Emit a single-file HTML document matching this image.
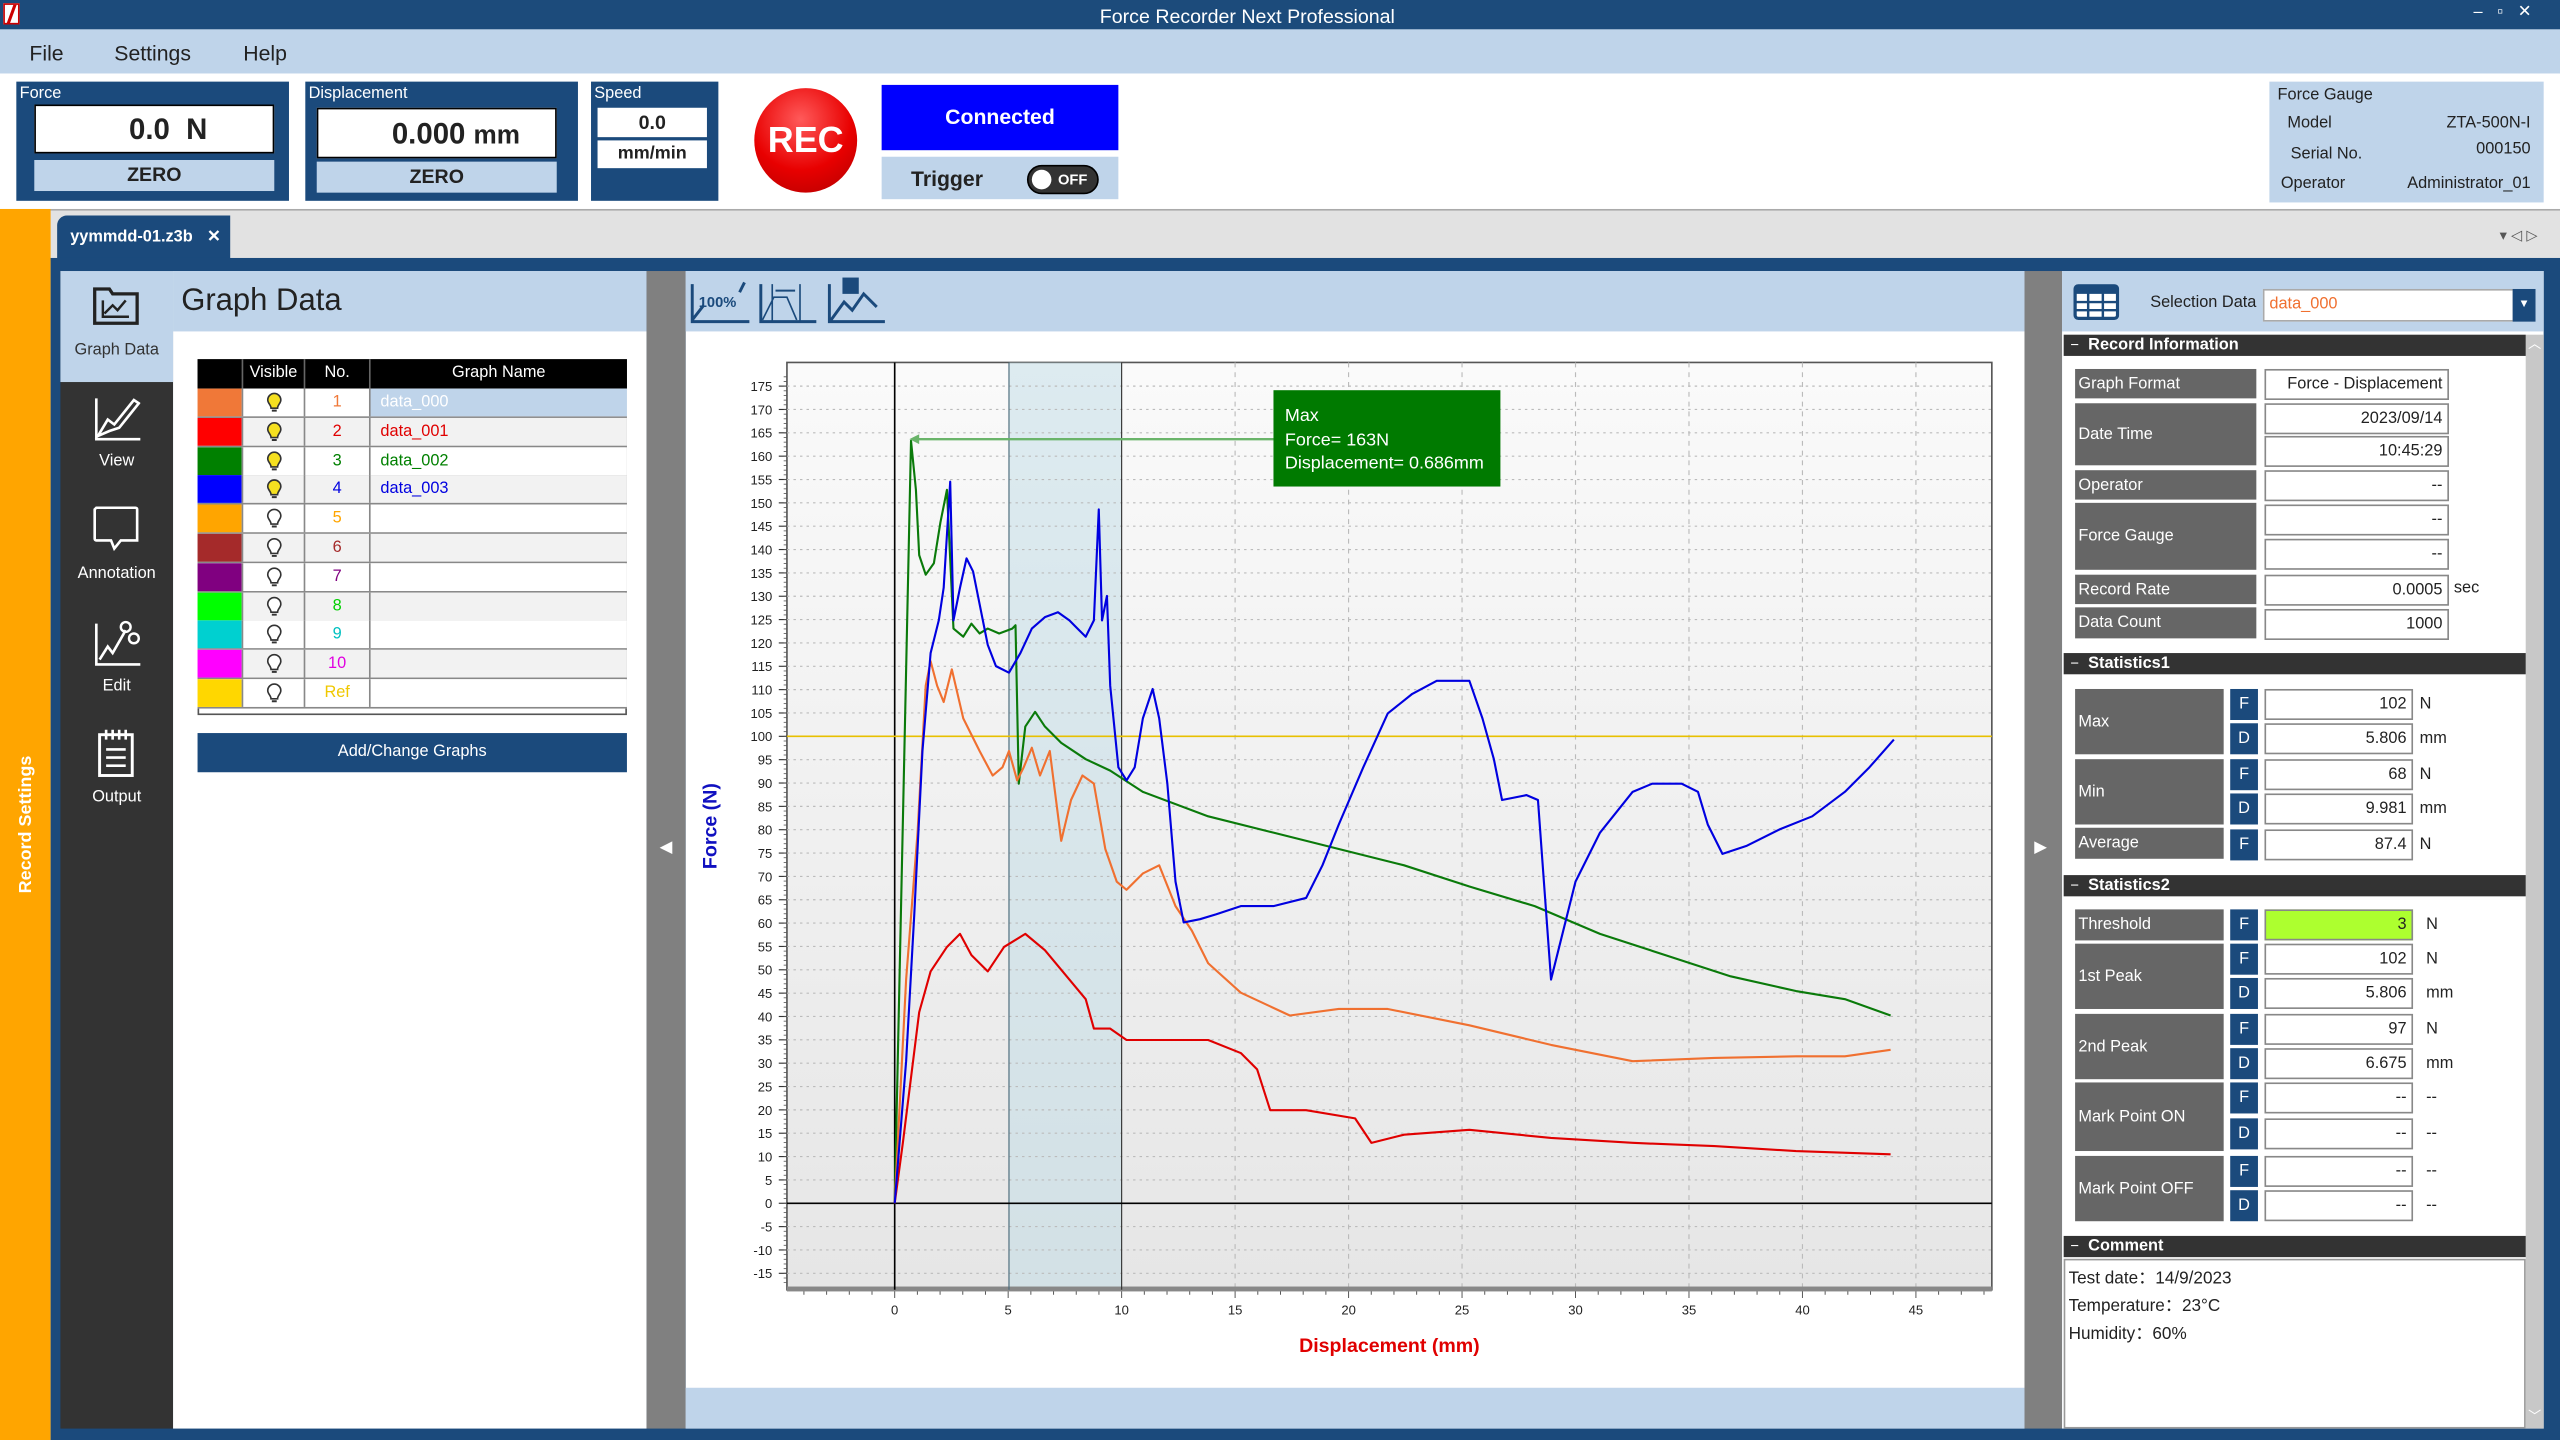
<!DOCTYPE html>
<html><head><meta charset="utf-8">
<style>
*{box-sizing:border-box;margin:0;padding:0}
html,body{width:2560px;height:1440px;overflow:hidden;background:#fff}
#w{position:absolute;left:0;top:0;width:1568px;height:882px;transform:scale(1.632653);transform-origin:0 0;font-family:"Liberation Sans",sans-serif;font-size:10px;color:#222}
.a{position:absolute}
.lbl{position:absolute;background:#666;color:#fff;font-size:10px;padding-left:2px;display:flex;align-items:center}
.val{position:absolute;background:#fff;border:1px solid #888;font-size:10px;text-align:right;padding-right:3px;line-height:18px;height:19px}
.fd{position:absolute;background:#1b4a7c;color:#fff;font-size:10px;text-align:center;line-height:19px;width:17px;height:19px}
.unit{position:absolute;font-size:10px}
.sec{position:absolute;left:1264px;width:283px;height:13px;background:#333;color:#fff;font-weight:bold;font-size:10px;line-height:13px;padding-left:15px}
.sec:before{content:"−";position:absolute;left:4px;font-weight:normal;font-size:9px}
.nav{position:absolute;left:37px;width:69px;text-align:center;color:#fff;font-size:10px}
.row{position:absolute;left:121px;width:263px;height:18px;border-bottom:1px solid #888}
.row div{position:absolute;top:0;height:17px;line-height:17px;font-size:10px}
.row svg{position:absolute;left:14px;top:2px}
</style></head><body><div id="w">
<div class="a" style="left:0;top:0;width:1568px;height:18px;background:#1c4b7b"></div>
<div class="a" style="left:2px;top:2px;width:10px;height:13px;background:#fff;border:1px solid #c00"><div style="position:absolute;left:3px;top:0;width:2px;height:12px;background:#c00;transform:skewX(-20deg)"></div></div>
<div class="a" style="left:0;top:3px;width:1528px;text-align:center;color:#fff;font-size:12px">Force Recorder Next Professional</div>
<div class="a" style="left:1515px;top:2px;color:#fff;font-size:10px;letter-spacing:9px">–▫✕</div>
<div class="a" style="left:0;top:18px;width:1568px;height:27px;background:#bfd4ea"></div>
<div class="a" style="left:18px;top:25px;font-size:13px">File</div>
<div class="a" style="left:70px;top:25px;font-size:13px">Settings</div>
<div class="a" style="left:149px;top:25px;font-size:13px">Help</div>
<div class="a" style="left:10px;top:50px;width:167px;height:73px;background:#1b4a7c"></div>
<div class="a" style="left:12px;top:52px;color:#fff;font-size:10px">Force</div>
<div class="a" style="left:21px;top:64px;width:147px;height:30px;background:#fff;border:1px solid #000;font-size:18px;font-weight:bold;line-height:28px;padding-left:57px">0.0&nbsp;&nbsp;N</div>
<div class="a" style="left:21px;top:98px;width:147px;height:19px;background:#bfd4ea;font-weight:bold;font-size:12px;text-align:center;line-height:19px">ZERO</div>
<div class="a" style="left:187px;top:50px;width:167px;height:73px;background:#1b4a7c"></div>
<div class="a" style="left:189px;top:52px;color:#fff;font-size:10px">Displacement</div>
<div class="a" style="left:194px;top:66px;width:147px;height:31px;background:#fff;border:1px solid #000;font-size:18px;font-weight:bold;line-height:30px;padding-left:45px">0.000 <span style="font-size:16px">mm</span></div>
<div class="a" style="left:194px;top:99px;width:147px;height:19px;background:#bfd4ea;font-weight:bold;font-size:12px;text-align:center;line-height:19px">ZERO</div>
<div class="a" style="left:362px;top:50px;width:78px;height:73px;background:#1b4a7c"></div>
<div class="a" style="left:364px;top:52px;color:#fff;font-size:10px">Speed</div>
<div class="a" style="left:366px;top:66px;width:67px;height:18px;background:#fff;font-weight:bold;font-size:12px;text-align:center;line-height:18px">0.0</div>
<div class="a" style="left:366px;top:86px;width:67px;height:17px;background:#fff;font-weight:bold;font-size:11px;text-align:center;line-height:17px">mm/min</div>
<div class="a" style="left:462px;top:54px;width:63px;height:64px;border-radius:50%;background:radial-gradient(circle at 45% 30%,#ff5a5a,#e80000 55%,#b00000);color:#fff;font-weight:bold;font-size:22px;text-align:center;line-height:64px">REC</div>
<div class="a" style="left:540px;top:52px;width:145px;height:40px;background:#0000ff;color:#fff;font-weight:bold;font-size:13px;text-align:center;line-height:40px">Connected</div>
<div class="a" style="left:540px;top:96px;width:145px;height:26px;background:#bfd4ea"></div>
<div class="a" style="left:558px;top:102px;font-weight:bold;font-size:13px">Trigger</div>
<div class="a" style="left:629px;top:101px;width:44px;height:18px;border-radius:9px;background:#333;border:1px solid #000"><div style="position:absolute;left:2px;top:2px;width:12px;height:12px;border-radius:50%;background:#fff"></div><div style="position:absolute;left:18px;top:3px;color:#fff;font-size:9px;font-weight:bold">OFF</div></div>
<div class="a" style="left:1390px;top:50px;width:168px;height:74px;background:#bfd4ea"></div>
<div class="a" style="left:1395px;top:53px;font-size:10px">Force Gauge</div>
<div class="a" style="left:1401px;top:70px;font-size:10px">Model</div>
<div class="a" style="left:1403px;top:89px;font-size:10px">Serial No.</div>
<div class="a" style="left:1397px;top:107px;font-size:10px">Operator</div>
<div class="a" style="left:1450px;top:70px;width:100px;text-align:right;font-size:10px">ZTA-500N-I</div>
<div class="a" style="left:1450px;top:86px;width:100px;text-align:right;font-size:10px">000150</div>
<div class="a" style="left:1450px;top:107px;width:100px;text-align:right;font-size:10px">Administrator_01</div>
<div class="a" style="left:0;top:128px;width:1568px;height:32px;background:#e2e2e2;border-top:1px solid #aaa"></div>
<div class="a" style="left:0;top:128px;width:31px;height:754px;background:#ffa500"></div>
<div class="a" style="left:16px;top:505px;transform:translate(-50%,-50%) rotate(-90deg);color:#fff;font-weight:bold;font-size:11px;white-space:nowrap">Record Settings</div>
<div class="a" style="left:35px;top:132px;width:106px;height:28px;background:#1b4a7c;border-radius:6px 0 0 0;color:#fff;font-weight:bold;font-size:10px;line-height:28px;padding-left:8px">yymmdd-01.z3b <span style="margin-left:6px">✕</span></div>
<div class="a" style="left:1531px;top:139px;font-size:9px;color:#555">▾ ◁ ▷</div>
<div class="a" style="left:31px;top:158px;width:1537px;height:724px;background:#1b4a7c"></div>
<div class="a" style="left:37px;top:166px;width:69px;height:709px;background:#333"></div>
<div class="a" style="left:37px;top:166px;width:69px;height:68px;background:#bfd4ea"></div>
<svg class="a" style="left:56px;top:174px" width="30" height="26" viewBox="0 0 30 26"><path d="M2 3h9l2 3h15v18H2z" fill="none" stroke="#222" stroke-width="2"/><path d="M7 10v10h16M8 18l5-5 3 3 5-6" fill="none" stroke="#222" stroke-width="1.5"/></svg>
<div class="nav" style="top:209px;color:#333">Graph Data</div>
<svg class="a" style="left:56px;top:240px" width="30" height="32" viewBox="0 0 30 32"><path d="M3 4v25h27" fill="none" stroke="#fff" stroke-width="1.6"/><path d="M4 27l6-10 4 3 12-15 3 2-12 15-6 2z" fill="none" stroke="#fff" stroke-width="1.6"/></svg>
<div class="nav" style="top:277px">View</div>
<svg class="a" style="left:56px;top:309px" width="30" height="30" viewBox="0 0 30 30"><path d="M3 2h24a1 1 0 0 1 1 1v19h-10l-4 5-2-5H3a1 1 0 0 1-1-1V3z" fill="none" stroke="#fff" stroke-width="1.6"/></svg>
<div class="nav" style="top:346px">Annotation</div>
<svg class="a" style="left:56px;top:378px" width="30" height="32" viewBox="0 0 30 32"><path d="M3 4v25h27" fill="none" stroke="#fff" stroke-width="1.6"/><path d="M5 26l5-8 3 4 8-14" fill="none" stroke="#fff" stroke-width="1.6"/><circle cx="21" cy="6" r="3" fill="none" stroke="#fff" stroke-width="1.5"/><circle cx="26" cy="13" r="3" fill="none" stroke="#fff" stroke-width="1.5"/></svg>
<div class="nav" style="top:415px">Edit</div>
<svg class="a" style="left:58px;top:445px" width="26" height="32" viewBox="0 0 26 32"><rect x="3" y="5" width="20" height="25" fill="none" stroke="#fff" stroke-width="1.8"/><path d="M7 2v6M11 2v6M15 2v6M19 2v6M7 14h12M7 19h12M7 24h12" stroke="#fff" stroke-width="1.6"/></svg>
<div class="nav" style="top:483px">Output</div>
<div class="a" style="left:106px;top:166px;width:290px;height:709px;background:#fff"></div>
<div class="a" style="left:106px;top:166px;width:290px;height:37px;background:#bfd4ea"></div>
<div class="a" style="left:111px;top:174px;font-size:19px;color:#222">Graph Data</div>
<div class="a" style="left:121px;top:220px;width:263px;height:218px;border:1px solid #555;background:#fff"></div>
<div class="a" style="left:121px;top:220px;width:263px;height:18px;background:#000;color:#fff;font-size:10px;line-height:18px">
<span class="a" style="left:27px;width:38px;text-align:center;border-left:1px solid #666;height:18px">Visible</span><span class="a" style="left:65px;width:40px;text-align:center;border-left:1px solid #666;height:18px">No.</span><span class="a" style="left:105px;width:158px;text-align:center;border-left:1px solid #666;height:18px">Graph Name</span></div>
<div id="rows"></div>
<div class="a" style="left:121px;top:449px;width:263px;height:24px;background:#1b4a7c;color:#fff;font-size:10px;text-align:center;line-height:24px">Add/Change Graphs</div>
<div class="a" style="left:396px;top:166px;width:24px;height:709px;background:#808080"></div>
<div class="a" style="left:404px;top:514px;color:#fff;font-size:10px">◀</div>
<div class="a" style="left:1240px;top:166px;width:23px;height:709px;background:#808080"></div>
<div class="a" style="left:1246px;top:514px;color:#fff;font-size:10px">▶</div>
<div class="a" style="left:420px;top:166px;width:820px;height:709px;background:#fff"></div>
<div class="a" style="left:420px;top:166px;width:820px;height:37px;background:#bfd4ea"></div>
<div class="a" style="left:420px;top:850px;width:820px;height:25px;background:#bfd4ea"></div>
<svg class="a" style="left:420px;top:166px" width="140" height="37" viewBox="0 0 140 37">
<g fill="none" stroke="#1b4a7c" stroke-width="1.8"><path d="M4 8v23h35M4 30l7-9"/><path d="M36 7l-3 6"/><path d="M46 8v23h34"/><path d="M47 30l7-14h8l6 14M53 8v23M70 8v23" stroke-width="1"/><path d="M55 12h12" stroke-width="1.2"/><path d="M88 8v23h34M89 30l8-11 5 5 7-10 8 8"/></g>
<text x="8" y="22" font-size="9" font-weight="bold" fill="#1b4a7c" font-family="Liberation Sans">100%</text>
<rect x="96" y="4" width="10" height="10" fill="#1b4a7c"/>
</svg>
<svg class="a" style="left:420px;top:203px" width="820" height="647" viewBox="420 203 820 647" font-family="Liberation Sans">
<defs><linearGradient id="g" x1="0" y1="0" x2="0" y2="1"><stop offset="0" stop-color="#fafafa"/><stop offset="1" stop-color="#e6e6e6"/></linearGradient></defs>
<rect x="482" y="222" width="738" height="568" fill="url(#g)" stroke="#555"/>
<rect x="618" y="222" width="69" height="568" fill="#bfdce6" opacity="0.5"/>
<g id="grid"></g>
<line x1="548" y1="222" x2="548" y2="790" stroke="#000"/>
<line x1="618" y1="222" x2="618" y2="790" stroke="#4a6a7a" stroke-width="0.7"/>
<line x1="687" y1="222" x2="687" y2="790" stroke="#333" stroke-width="0.7"/>
<line x1="482" y1="737" x2="1220" y2="737" stroke="#000"/>
<line x1="482" y1="451" x2="1220" y2="451" stroke="#e8c000"/>
<g fill="none" stroke-width="1.3" stroke-linejoin="round">
<polyline stroke="#0a7a0a" points="548,737 558,270 561,300 563,340 567,352 572,345 576,320 580,300 584,385 590,390 595,382 600,388 605,385 612,388 620,385 622,383 624,480 628,445 634,436 640,445 650,455 665,465 680,472 700,485 740,500 780,510 820,520 860,530 900,543 940,555 980,572 1020,585 1060,598 1100,607 1130,612 1158,622"/>
<polyline stroke="#f07030" points="548,737 555,600 562,510 567,420 570,405 574,420 578,430 583,410 590,440 600,460 608,475 614,470 618,460 623,478 627,470 632,458 637,475 643,460 650,515 656,490 663,475 670,480 677,520 684,540 690,545 700,535 710,530 720,555 730,570 740,590 760,608 790,622 820,618 850,618 900,628 950,640 1000,650 1050,648 1100,647 1130,647 1158,643"/>
<polyline stroke="#e00000" points="548,737 553,700 558,660 563,620 570,595 580,580 588,572 595,585 605,595 615,580 628,572 640,582 655,600 665,612 670,630 680,630 690,637 720,637 740,637 760,645 770,655 778,680 800,680 830,685 840,700 860,695 900,692 950,697 1000,700 1050,702 1100,705 1158,707"/>
<polyline stroke="#0000e0" points="548,737 555,650 560,560 565,460 570,400 575,380 578,360 582,295 584,380 588,360 592,342 596,350 600,370 605,395 610,408 618,412 625,400 632,385 640,378 648,375 655,380 660,385 665,390 670,380 673,312 675,380 678,365 680,420 685,470 690,478 695,470 700,440 706,422 710,440 715,480 720,540 725,565 735,563 745,560 760,555 780,555 800,550 810,530 820,505 835,470 850,437 865,425 880,417 900,417 908,440 915,465 920,490 935,487 942,490 950,600 955,580 965,540 980,510 1000,485 1012,480 1030,480 1040,485 1046,505 1055,523 1070,518 1090,508 1110,500 1130,485 1145,470 1160,453"/>
</g>
<line x1="780" y1="269" x2="562" y2="269" stroke="#6ab46a" stroke-width="1.5"/>
<path d="M557 269l6-3v6z" fill="#6ab46a"/>
<rect x="780" y="239" width="139" height="59" fill="#007a00"/>
<text x="787" y="258" fill="#fff" font-size="11">Max</text>
<text x="787" y="273" fill="#fff" font-size="11">Force= 163N</text>
<text x="787" y="287" fill="#fff" font-size="11">Displacement= 0.686mm</text>
<g id="lab" font-size="8" fill="#222"></g>
<text transform="translate(439,506) rotate(-90)" text-anchor="middle" fill="#1010c0" font-weight="bold" font-size="12">Force (N)</text>
<text x="851" y="828" text-anchor="middle" fill="#e00000" font-weight="bold" font-size="12">Displacement (mm)</text>
</svg>
<div class="a" style="left:1263px;top:166px;width:295px;height:709px;background:#fff"></div>
<div class="a" style="left:1263px;top:166px;width:295px;height:37px;background:#bfd4ea"></div>
<svg class="a" style="left:1270px;top:174px" width="28" height="22" viewBox="0 0 28 22"><rect x="1" y="1" width="26" height="20" rx="2" fill="#fff" stroke="#1b4a7c" stroke-width="2"/><rect x="1" y="1" width="26" height="5" fill="#1b4a7c"/><path d="M1 11h26M1 16h26M9 1v20M18 1v20" stroke="#1b4a7c" stroke-width="1.5"/></svg>
<div class="a" style="left:1317px;top:180px;font-size:10px">Selection Data</div>
<div class="a" style="left:1386px;top:177px;width:154px;height:20px;background:#fff;border:1px solid #aaa;color:#f07030;font-size:10px;line-height:18px;padding-left:3px">data_000</div>
<div class="a" style="left:1539px;top:177px;width:14px;height:20px;background:#1b4a7c;color:#fff;font-size:7px;text-align:center;line-height:20px">▼</div>
<div class="a" style="left:1547px;top:205px;width:11px;height:670px;background:#c8c8c8"></div>
<div class="a" style="left:1547px;top:205px;width:11px;height:13px;color:#fff;font-size:8px;text-align:center">︿</div>
<div class="a" style="left:1547px;top:862px;width:11px;height:13px;color:#fff;font-size:8px;text-align:center">﹀</div>
<div class="sec" style="top:205px">Record Information</div>
<div class="lbl" style="left:1271px;top:226px;width:111px;height:18px">Graph Format</div>
<div class="val" style="left:1387px;top:226px;width:113px">Force - Displacement</div>
<div class="lbl" style="left:1271px;top:247px;width:111px;height:38px">Date Time</div>
<div class="val" style="left:1387px;top:247px;width:113px">2023/09/14</div>
<div class="val" style="left:1387px;top:267px;width:113px">10:45:29</div>
<div class="lbl" style="left:1271px;top:288px;width:111px;height:18px">Operator</div>
<div class="val" style="left:1387px;top:288px;width:113px">--</div>
<div class="lbl" style="left:1271px;top:308px;width:111px;height:41px">Force Gauge</div>
<div class="val" style="left:1387px;top:309px;width:113px">--</div>
<div class="val" style="left:1387px;top:330px;width:113px">--</div>
<div class="lbl" style="left:1271px;top:352px;width:111px;height:18px">Record Rate</div>
<div class="val" style="left:1387px;top:352px;width:113px">0.0005</div><div class="unit" style="left:1503px;top:355px">sec</div>
<div class="lbl" style="left:1271px;top:372px;width:111px;height:19px">Data Count</div>
<div class="val" style="left:1387px;top:373px;width:113px">1000</div>
<div class="sec" style="top:400px">Statistics1</div>
<div class="lbl" style="left:1271px;top:422px;width:91px;height:40px">Max</div>
<div class="fd" style="left:1366px;top:422px">F</div><div class="val" style="left:1387px;top:422px;width:91px">102</div><div class="unit" style="left:1482px;top:426px">N</div>
<div class="fd" style="left:1366px;top:443px">D</div><div class="val" style="left:1387px;top:443px;width:91px">5.806</div><div class="unit" style="left:1482px;top:447px">mm</div>
<div class="lbl" style="left:1271px;top:465px;width:91px;height:40px">Min</div>
<div class="fd" style="left:1366px;top:465px">F</div><div class="val" style="left:1387px;top:465px;width:91px">68</div><div class="unit" style="left:1482px;top:469px">N</div>
<div class="fd" style="left:1366px;top:486px">D</div><div class="val" style="left:1387px;top:486px;width:91px">9.981</div><div class="unit" style="left:1482px;top:490px">mm</div>
<div class="lbl" style="left:1271px;top:507px;width:91px;height:19px">Average</div>
<div class="fd" style="left:1366px;top:508px">F</div><div class="val" style="left:1387px;top:508px;width:91px">87.4</div><div class="unit" style="left:1482px;top:512px">N</div>
<div class="sec" style="top:536px">Statistics2</div>
<div class="lbl" style="left:1271px;top:557px;width:91px;height:19px">Threshold</div>
<div class="fd" style="left:1366px;top:557px">F</div><div class="val" style="left:1387px;top:557px;width:91px;background:#adff2f">3</div><div class="unit" style="left:1486px;top:561px">N</div>
<div class="lbl" style="left:1271px;top:578px;width:91px;height:40px">1st Peak</div>
<div class="fd" style="left:1366px;top:578px">F</div><div class="val" style="left:1387px;top:578px;width:91px">102</div><div class="unit" style="left:1486px;top:582px">N</div>
<div class="fd" style="left:1366px;top:599px">D</div><div class="val" style="left:1387px;top:599px;width:91px">5.806</div><div class="unit" style="left:1486px;top:603px">mm</div>
<div class="lbl" style="left:1271px;top:621px;width:91px;height:40px">2nd Peak</div>
<div class="fd" style="left:1366px;top:621px">F</div><div class="val" style="left:1387px;top:621px;width:91px">97</div><div class="unit" style="left:1486px;top:625px">N</div>
<div class="fd" style="left:1366px;top:642px">D</div><div class="val" style="left:1387px;top:642px;width:91px">6.675</div><div class="unit" style="left:1486px;top:646px">mm</div>
<div class="lbl" style="left:1271px;top:663px;width:91px;height:42px">Mark Point ON</div>
<div class="fd" style="left:1366px;top:663px">F</div><div class="val" style="left:1387px;top:663px;width:91px">--</div><div class="unit" style="left:1486px;top:667px">--</div>
<div class="fd" style="left:1366px;top:685px">D</div><div class="val" style="left:1387px;top:685px;width:91px">--</div><div class="unit" style="left:1486px;top:689px">--</div>
<div class="lbl" style="left:1271px;top:708px;width:91px;height:40px">Mark Point OFF</div>
<div class="fd" style="left:1366px;top:708px">F</div><div class="val" style="left:1387px;top:708px;width:91px">--</div><div class="unit" style="left:1486px;top:712px">--</div>
<div class="fd" style="left:1366px;top:729px">D</div><div class="val" style="left:1387px;top:729px;width:91px">--</div><div class="unit" style="left:1486px;top:733px">--</div>
<div class="sec" style="top:757px">Comment</div>
<div class="a" style="left:1264px;top:771px;width:283px;height:104px;border:1px solid #999;background:#fff;font-size:10.5px;line-height:17px;padding:3px 2px">Test date：14/9/2023<br>Temperature：23°C<br>Humidity：60%</div>
</div>
<script>
var R=[["#f07838","#f07838","1","data_000",1],["#ff0000","#e00000","2","data_001"],["#008000","#008000","3","data_002"],["#0000ff","#0000e0","4","data_003"],["#ffa500","#ffa500","5",""],["#a52a2a","#a52a2a","6",""],["#800080","#800080","7",""],["#00ff00","#00d000","8",""],["#00d0d0","#00c0c0","9",""],["#ff00ff","#e000e0","10",""],["#ffd700","#f0c800","Ref",""]];
var h="";R.forEach(function(r,i){var t=238+i*17.8,lit=i<4,bg=i%2?"#f2f2f2":"#fff";
var bulb='<svg width="10" height="13" viewBox="0 0 10 13"><path d="M5 1a4 4 0 0 0-4 4c0 2 2 3 2 5h4c0-2 2-3 2-5a4 4 0 0 0-4-4z" fill="'+(lit?'#f5e020':'#fff')+'" stroke="#333" stroke-width="1"/><path d="M3.5 11.5h3" stroke="#333" stroke-width="1.2"/></svg>';
h+='<div class="row" style="top:'+t+'px;background:'+bg+'"><div style="left:0;width:27px;background:'+r[0]+'"></div><div style="left:27px;width:38px;border-left:1px solid #888">'+bulb+'</div><div style="left:65px;width:40px;text-align:center;border-left:1px solid #888;color:'+r[1]+'">'+r[2]+'</div><div style="left:105px;width:158px;border-left:1px solid #888;padding-left:6px;color:'+(r[4]?'#fff':r[1])+';background:'+(r[4]?'#bfd4ea':'transparent')+'">'+r[3]+'</div></div>';});
document.getElementById("rows").innerHTML=h;
var ns="http://www.w3.org/2000/svg",g=document.getElementById("grid"),lab=document.getElementById("lab");
function el(p,n,a,t){var e=document.createElementNS(ns,n);for(var k in a)e.setAttribute(k,a[k]);if(t!==undefined)e.textContent=t;p.appendChild(e);}
for(var v=-15;v<=175;v+=5){var y=737-2.86*v;if(v!=0)el(g,"line",{x1:482,x2:1220,y1:y,y2:y,stroke:"#bbb","stroke-dasharray":"1.5 2.5","stroke-width":0.7});el(g,"line",{x1:477,x2:482,y1:y,y2:y,stroke:"#333","stroke-width":0.7});el(lab,"text",{x:473,y:y+3,"text-anchor":"end"},v);}
for(var v=-17;v<=177;v++){var y=737-2.86*v;el(g,"line",{x1:480,x2:482,y1:y,y2:y,stroke:"#555","stroke-width":0.5});}
for(var x=0;x<=45;x+=5){var px=548+13.9*x;if(x>10)el(g,"line",{x1:px,x2:px,y1:222,y2:790,stroke:"#bbb","stroke-dasharray":"3 3","stroke-width":0.7});el(lab,"text",{x:px,y:805,"text-anchor":"middle"},x);}
for(var x=-4;x<=48;x++){var px=548+13.9*x;el(g,"line",{x1:px,x2:px,y1:790,y2:x%5?793:795,stroke:"#555","stroke-width":0.6});}
el(g,"rect",{x:482,y:788,width:738,height:3,fill:"#888"});
</script>
</body></html>
